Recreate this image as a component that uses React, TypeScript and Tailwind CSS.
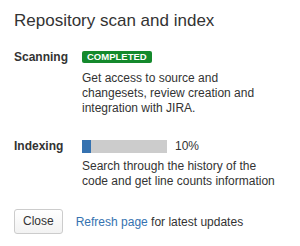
export default function App() {
  return (
    <div
      className="w-[300px] h-[246px] bg-white px-[14px] pt-[11px] text-[#333333]"
      style={{ fontFamily: '"Liberation Sans", Arial, sans-serif' }}
    >
      <h2 className="text-[17px] leading-[20px] font-normal">Repository scan and index</h2>

      <div className="mt-[18px] flex items-center h-[16px]">
        <div className="w-[68px] text-[12px] leading-[16px] font-bold">Scanning</div>
        <span className="inline-flex items-center h-[12px] px-[5px] rounded-[2px] bg-[#14892c] text-white text-[9.5px] font-bold leading-[12px]">
          COMPLETED
        </span>
      </div>
      <p className="mt-[6px] ml-[68px] text-[12px] leading-[15px]">
        Get access to source and
        <br />
        changesets, review creation and
        <br />
        integration with JIRA.
      </p>

      <div className="mt-[22px] flex items-center h-[16px]">
        <div className="w-[68px] text-[12px] leading-[16px] font-bold">Indexing</div>
        <div className="w-[85px] h-[13px] bg-[#cccccc] flex">
          <div className="w-[9px] h-full bg-[#3572b0]" />
        </div>
        <span className="ml-[8px] text-[12px] leading-[16px]">10%</span>
      </div>
      <p className="mt-[5px] ml-[68px] text-[12px] leading-[15px]">
        Search through the history of the
        <br />
        code and get line counts information
      </p>

      <div className="mt-[20px] flex items-center">
        <button className="h-[25px] px-[8px] border border-[#cccccc] rounded-[3px] bg-gradient-to-b from-white to-[#f2f2f2] text-[12px] leading-[23px] text-[#333333]">
          Close
        </button>
        <span className="ml-[13px] text-[12px] leading-[16px]">
          <span className="text-[#3572b0]">Refresh page</span> for latest updates
        </span>
      </div>
    </div>
  );
}
